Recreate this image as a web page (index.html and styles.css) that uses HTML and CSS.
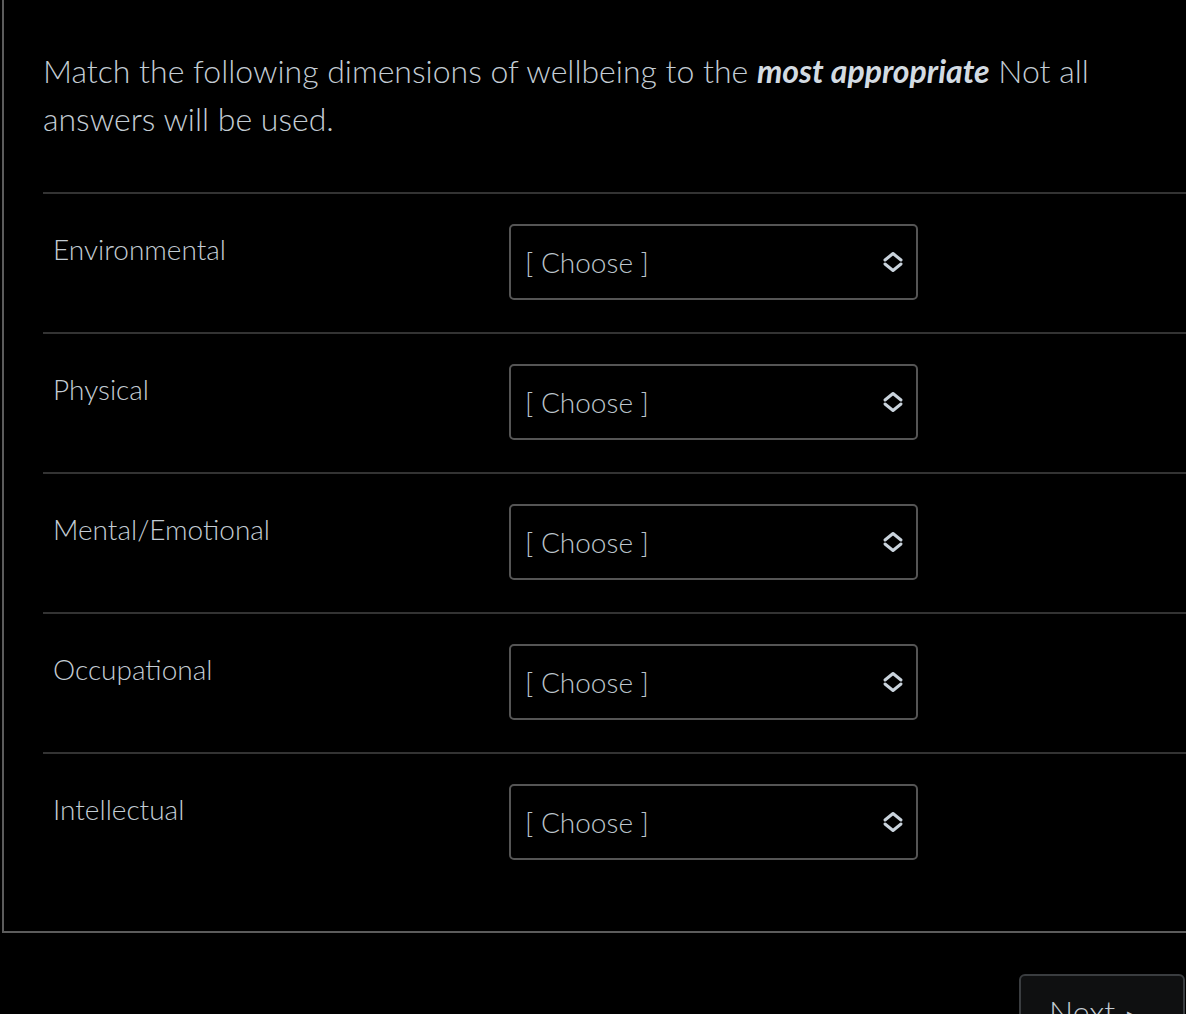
FILE: index.html
```html
<!DOCTYPE html>
<html lang="en">
<head>
    <meta charset="UTF-8">
    <meta name="viewport" content="width=device-width, initial-scale=1.0">
    <title>Quiz</title>
    <link rel="stylesheet" href="styles.css">
</head>
<body>

<div class="question">
    <p class="question-text">Match the following dimensions of wellbeing to the <strong><em>most appropriate</em></strong> Not all answers will be used.</p>

    <div class="answers">
        <div class="answer-row">
            <div class="answer-label">Environmental</div>
            <div class="select-box"><span>[ Choose ]</span>
                <svg class="arrows" width="22" height="24" viewBox="0 0 22 24"><path d="M3 10 L11 3.5 L19 10 M3 14 L11 20.5 L19 14" fill="none" stroke="#c9d3dc" stroke-width="3" stroke-linecap="round" stroke-linejoin="round"/></svg>
            </div>
        </div>
        <div class="answer-row">
            <div class="answer-label">Physical</div>
            <div class="select-box"><span>[ Choose ]</span>
                <svg class="arrows" width="22" height="24" viewBox="0 0 22 24"><path d="M3 10 L11 3.5 L19 10 M3 14 L11 20.5 L19 14" fill="none" stroke="#c9d3dc" stroke-width="3" stroke-linecap="round" stroke-linejoin="round"/></svg>
            </div>
        </div>
        <div class="answer-row">
            <div class="answer-label">Mental/Emotional</div>
            <div class="select-box"><span>[ Choose ]</span>
                <svg class="arrows" width="22" height="24" viewBox="0 0 22 24"><path d="M3 10 L11 3.5 L19 10 M3 14 L11 20.5 L19 14" fill="none" stroke="#c9d3dc" stroke-width="3" stroke-linecap="round" stroke-linejoin="round"/></svg>
            </div>
        </div>
        <div class="answer-row">
            <div class="answer-label">Occupational</div>
            <div class="select-box"><span>[ Choose ]</span>
                <svg class="arrows" width="22" height="24" viewBox="0 0 22 24"><path d="M3 10 L11 3.5 L19 10 M3 14 L11 20.5 L19 14" fill="none" stroke="#c9d3dc" stroke-width="3" stroke-linecap="round" stroke-linejoin="round"/></svg>
            </div>
        </div>
        <div class="answer-row">
            <div class="answer-label">Intellectual</div>
            <div class="select-box"><span>[ Choose ]</span>
                <svg class="arrows" width="22" height="24" viewBox="0 0 22 24"><path d="M3 10 L11 3.5 L19 10 M3 14 L11 20.5 L19 14" fill="none" stroke="#c9d3dc" stroke-width="3" stroke-linecap="round" stroke-linejoin="round"/></svg>
            </div>
        </div>
    </div>
</div>

<div class="footer-nav">
    <button class="next-btn">Next <span class="tri">&#9654;</span></button>
</div>

</body>
</html>
```

FILE: styles.css
```css
html, body {
    margin: 0;
    padding: 0;
    background-color: #000;
    overflow: hidden;
}
body {
    font-family: Lato, "Open Sans", sans-serif;
    font-weight: 300;
    color: #c3ccd4;
    width: 1186px;
    height: 1014px;
}
.question {
    width: 1300px;
    margin-left: 2px;
    border-left: 2px solid #5c5c5c;
    border-bottom: 2px solid #5c5c5c;
    padding: 47px 0 39px 39px;
}
.question-text {
    margin: 0 0 49px 0;
    width: 1080px;
    font-size: 32px;
    line-height: 48px;
}
.question-text strong {
    font-weight: 700;
    color: #d3dbe2;
}
.answer-row {
    display: flex;
    align-items: flex-start;
    height: 138px;
    border-top: 2px solid #333;
}
.answer-label {
    width: 456px;
    padding: 37px 0 0 10px;
    font-size: 28px;
    line-height: 36px;
}
.select-box {
    margin-top: 30px;
    width: 379px;
    height: 72px;
    border: 2px solid #555;
    border-radius: 5px;
    display: flex;
    align-items: center;
    justify-content: space-between;
    padding: 0 12px 0 14px;
    font-size: 28px;
    color: #bcc5cc;
}
.select-box span {
    padding-bottom: 1px;
}
.footer-nav {
    display: flex;
    justify-content: flex-end;
    padding: 41px 1px 0 0;
}
.next-btn {
    width: 166px;
    height: 70px;
    background-color: #0f1011;
    border: 2px solid #3a3d40;
    border-radius: 6px;
    color: #c3ccd4;
    font-family: Lato, sans-serif;
    font-weight: 300;
    font-size: 32px;
    padding: 16px 0 0 28px;
    text-align: left;
    line-height: 40px;
    display: flex;
    align-items: flex-start;
    gap: 12px;
}
.tri {
    font-size: 18px;
    padding-top: 4px;
}
```
